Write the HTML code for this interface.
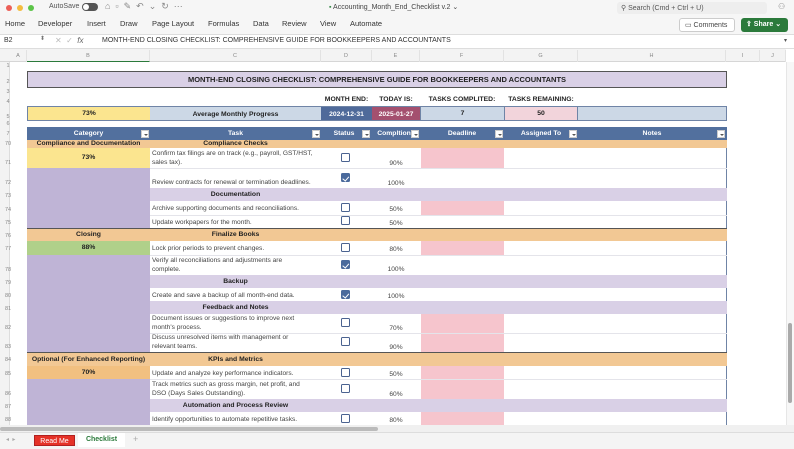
<!DOCTYPE html>
<html><head><meta charset="utf-8"><style>
*{margin:0;padding:0;box-sizing:border-box}
body{width:794px;height:449px;overflow:hidden;background:#fff;font-family:"Liberation Sans",sans-serif;position:relative;color:#222}
.a{position:absolute;white-space:nowrap}
.t{font-size:6.6px;color:#444;line-height:9px}
.b{font-weight:bold;font-size:6.8px;color:#222;text-align:center}
.c{text-align:center}
.cb{position:absolute;width:9px;height:9px;border:1.2px solid #4a6290;border-radius:1.5px;background:#fff}
.ck{background:#4a6a9c;border-color:#4a6a9c}
.ck:after{content:"";position:absolute;left:2.2px;top:0.6px;width:2.5px;height:4.5px;border:solid #fff;border-width:0 1.2px 1.2px 0;transform:rotate(40deg)}
.dd{position:absolute;width:8px;height:8px;background:#fff;border:1px solid #ccc}
.dd:after{content:"";position:absolute;left:1.5px;top:2.5px;border-left:2.5px solid transparent;border-right:2.5px solid transparent;border-top:2.5px solid #555}
.rn{position:absolute;left:0;width:16px;font-size:5.5px;color:#888;text-align:center}
.ch{position:absolute;top:50px;height:12px;font-size:5.5px;color:#888;text-align:center;line-height:12px;border-right:1px solid #e2e2e2}
.sh{position:absolute;left:150px;width:577px;height:13px;background:#d9d0e6}
.sh span{position:absolute;left:0;width:171px;top:3px;font-weight:bold;font-size:6.8px;color:#222;text-align:center;white-space:nowrap}
</style></head><body>
<div class="a" style="left:0;top:0;width:794px;height:34px;background:#f6f6f6"></div>
<div class="a" style="left:6px;top:5px;width:6px;height:6px;border-radius:50%;background:#ec5f57"></div>
<div class="a" style="left:17px;top:5px;width:6px;height:6px;border-radius:50%;background:#f4bc3f"></div>
<div class="a" style="left:28px;top:5px;width:6px;height:6px;border-radius:50%;background:#5cc448"></div>
<div class="a" style="left:49px;top:3px;font-size:7px;color:#555">AutoSave</div>
<div class="a" style="left:82px;top:3px;width:16px;height:8px;border-radius:4px;background:#555"></div>
<div class="a" style="left:83px;top:4px;width:6px;height:6px;border-radius:50%;background:#fff"></div>
<div class="a" style="left:105px;top:1px;font-size:9px;color:#888;letter-spacing:5px">⌂▫✎↶⌄↻⋯</div>
<div class="a" style="left:329px;top:3px;font-size:7px;color:#444"><span style="color:#3a8a4a">▪</span> Accounting_Month_End_Checklist v.2 ⌄</div>
<div class="a" style="left:617px;top:2px;width:150px;height:12px;background:#eee;border-radius:3px;font-size:7px;color:#555;padding:2px 0 0 4px">⚲ Search (Cmd + Ctrl + U)</div>
<div class="a" style="left:778px;top:2px;font-size:8px;color:#888">⚇</div>
<div class="a" style="left:5px;top:19px;font-size:7.5px;color:#333">Home</div>
<div class="a" style="left:38px;top:19px;font-size:7.5px;color:#333">Developer</div>
<div class="a" style="left:87px;top:19px;font-size:7.5px;color:#333">Insert</div>
<div class="a" style="left:120px;top:19px;font-size:7.5px;color:#333">Draw</div>
<div class="a" style="left:152px;top:19px;font-size:7.5px;color:#333">Page Layout</div>
<div class="a" style="left:208px;top:19px;font-size:7.5px;color:#333">Formulas</div>
<div class="a" style="left:253px;top:19px;font-size:7.5px;color:#333">Data</div>
<div class="a" style="left:282px;top:19px;font-size:7.5px;color:#333">Review</div>
<div class="a" style="left:320px;top:19px;font-size:7.5px;color:#333">View</div>
<div class="a" style="left:350px;top:19px;font-size:7.5px;color:#333">Automate</div>
<div class="a" style="left:679px;top:18px;width:56px;height:14px;border:1px solid #ccc;border-radius:3px;background:#fff;font-size:7px;color:#444;padding:2px 0 0 5px">▭ Comments</div>
<div class="a" style="left:741px;top:18px;width:47px;height:14px;border-radius:3px;background:#2b7a3b;font-size:7px;color:#fff;font-weight:bold;padding:2px 0 0 5px">⇪ Share ⌄</div>
<div class="a" style="left:0;top:34px;width:794px;height:15px;background:#fff;border-top:1px solid #ddd;border-bottom:1px solid #ddd"></div>
<div class="a" style="left:4px;top:37px;font-size:7px;color:#333">B2</div>
<div class="a" style="left:40px;top:35px;font-size:6px;color:#777">⬍</div>
<div class="a" style="left:55px;top:36px;font-size:8px;color:#bbb">✕ &nbsp;✓ &nbsp;<i style="color:#666">fx</i></div>
<div class="a" style="left:102px;top:37px;font-size:7px;color:#333">MONTH-END CLOSING CHECKLIST: COMPREHENSIVE GUIDE FOR BOOKKEEPERS AND ACCOUNTANTS</div>
<div class="a" style="left:784px;top:37px;font-size:6px;color:#555">▾</div>
<div class="a" style="left:0;top:49px;width:786px;height:13px;background:#f3f3f3;border-bottom:1px solid #d6d6d6"></div>
<div class="ch" style="left:10px;width:17px">A</div>
<div class="ch" style="left:27px;width:123px;border-bottom:1px solid #2b7a3b">B</div>
<div class="ch" style="left:150px;width:171px">C</div>
<div class="ch" style="left:321px;width:51px">D</div>
<div class="ch" style="left:372px;width:48px">E</div>
<div class="ch" style="left:420px;width:84px">F</div>
<div class="ch" style="left:504px;width:74px">G</div>
<div class="ch" style="left:578px;width:148px">H</div>
<div class="ch" style="left:726px;width:34px">I</div>
<div class="ch" style="left:760px;width:26px">J</div>
<div class="a" style="left:0;top:62px;width:10px;height:365px;background:#f3f3f3;border-right:1px solid #ddd"></div>
<div class="rn" style="top:63px">1</div><div class="rn" style="top:79px">2</div><div class="rn" style="top:89px">3</div><div class="rn" style="top:99px">4</div><div class="rn" style="top:114px">5</div><div class="rn" style="top:121px">6</div><div class="rn" style="top:131px">7</div><div class="rn" style="top:141px">70</div><div class="rn" style="top:160px">71</div><div class="rn" style="top:180px">72</div><div class="rn" style="top:193px">73</div><div class="rn" style="top:207px">74</div><div class="rn" style="top:220px">75</div><div class="rn" style="top:233px">76</div><div class="rn" style="top:246px">77</div><div class="rn" style="top:267px">78</div><div class="rn" style="top:280px">79</div><div class="rn" style="top:293px">80</div><div class="rn" style="top:306px">81</div><div class="rn" style="top:325px">82</div><div class="rn" style="top:344px">83</div><div class="rn" style="top:357px">84</div><div class="rn" style="top:371px">85</div><div class="rn" style="top:391px">86</div><div class="rn" style="top:404px">87</div><div class="rn" style="top:417px">88</div>
<div class="a b" style="left:27px;top:71px;width:700px;height:17px;background:#d9d0e6;border:1px solid #555;font-size:7.5px;line-height:15px">MONTH-END CLOSING CHECKLIST: COMPREHENSIVE GUIDE FOR BOOKKEEPERS AND ACCOUNTANTS</div>
<div class="a b" style="left:321px;top:96px;width:51px">MONTH END:</div>
<div class="a b" style="left:372px;top:96px;width:48px">TODAY IS:</div>
<div class="a b" style="left:420px;top:96px;width:84px">TASKS COMPLITED:</div>
<div class="a b" style="left:504px;top:96px;width:74px">TASKS REMAINING:</div>
<div class="a" style="left:27px;top:106px;width:700px;height:15px;background:#ccd8e6;border:1px solid #6f84a6"></div>
<div class="a b" style="left:28px;top:107px;width:122px;height:13px;background:#fbe58f;line-height:13px">73%</div>
<div class="a b" style="left:150px;top:107px;width:171px;line-height:15px">Average Monthly Progress</div>
<div class="a b" style="left:321px;top:107px;width:51px;height:13px;background:#4f6a9a;color:#fff;line-height:15px">2024-12-31</div>
<div class="a b" style="left:372px;top:107px;width:48px;height:13px;background:#a4506f;color:#fff;line-height:15px">2025-01-27</div>
<div class="a b" style="left:420px;top:107px;width:84px;line-height:13px;border-left:1px solid #6f84a6">7</div>
<div class="a b" style="left:504px;top:107px;width:74px;height:13px;background:#f2d4db;line-height:13px;border-left:1px solid #6f84a6;border-right:1px solid #6f84a6">50</div>
<div class="a" style="left:27px;top:127px;width:700px;height:13px;background:#52709e"></div>
<div class="a b" style="left:27px;top:130px;width:123px;color:#fff">Category</div><div class="dd" style="left:141px;top:130px"></div>
<div class="a b" style="left:150px;top:130px;width:171px;color:#fff">Task</div><div class="dd" style="left:312px;top:130px"></div>
<div class="a b" style="left:321px;top:130px;width:46px;color:#fff">Status</div><div class="dd" style="left:362px;top:130px"></div>
<div class="a b" style="left:374px;top:130px;width:40px;color:#fff;overflow:hidden">Compltion</div><div class="dd" style="left:411px;top:130px"></div>
<div class="a b" style="left:420px;top:130px;width:84px;color:#fff">Deadline</div><div class="dd" style="left:495px;top:130px"></div>
<div class="a b" style="left:504px;top:130px;width:74px;color:#fff">Assigned To</div><div class="dd" style="left:569px;top:130px"></div>
<div class="a b" style="left:578px;top:130px;width:148px;color:#fff">Notes</div><div class="dd" style="left:717px;top:130px"></div>
<div class="a" style="left:27px;top:140px;width:700px;height:285px;border-left:1px solid #6f84a6;border-right:1px solid #6f84a6"></div>
<div class="a" style="left:27px;top:140px;width:700px;height:8px;background:#f2c894"></div>
<div class="a b" style="left:27px;top:140px;width:123px;line-height:8px">Compliance and Documentation</div>
<div class="a b" style="left:150px;top:140px;width:171px;line-height:8px">Compliance Checks</div>
<div class="a" style="left:27px;top:228px;width:700px;height:13px;background:#f2c894;border-top:1px solid #555"></div>
<div class="a b" style="left:27px;top:231px;width:123px">Closing</div>
<div class="a b" style="left:150px;top:231px;width:171px">Finalize Books</div>
<div class="a" style="left:27px;top:352px;width:700px;height:14px;background:#f2c894;border-top:1px solid #555"></div>
<div class="a b" style="left:27px;top:356px;width:123px">Optional (For Enhanced Reporting)</div>
<div class="a b" style="left:150px;top:356px;width:171px">KPIs and Metrics</div>
<div class="a b" style="left:27px;top:148px;width:123px;height:20px;background:#fbe58f;line-height:20px">73%</div>
<div class="a" style="left:27px;top:168px;width:123px;height:60px;background:#bfb4d6"></div>
<div class="a b" style="left:27px;top:241px;width:123px;height:14px;background:#b0d08a;line-height:13px">88%</div>
<div class="a" style="left:27px;top:255px;width:123px;height:97px;background:#bfb4d6"></div>
<div class="a b" style="left:27px;top:366px;width:123px;height:13px;background:#f2c080;line-height:13px">70%</div>
<div class="a" style="left:27px;top:379px;width:123px;height:46px;background:#bfb4d6"></div>
<div class="sh" style="top:188px"><span>Documentation</span></div>
<div class="sh" style="top:275px"><span>Backup</span></div>
<div class="sh" style="top:301px"><span>Feedback and Notes</span></div>
<div class="sh" style="top:399px"><span>Automation and Process Review</span></div>
<div class="a" style="left:421px;top:148px;width:83px;height:20px;background:#f6c5cd"></div>
<div class="a" style="left:421px;top:201px;width:83px;height:14px;background:#f6c5cd"></div>
<div class="a" style="left:421px;top:241px;width:83px;height:14px;background:#f6c5cd"></div>
<div class="a" style="left:421px;top:314px;width:83px;height:38px;background:#f6c5cd"></div>
<div class="a" style="left:421px;top:366px;width:83px;height:33px;background:#f6c5cd"></div>
<div class="a" style="left:421px;top:412px;width:83px;height:13px;background:#f6c5cd"></div>
<div class="a" style="left:150px;top:168px;width:577px;border-top:1px solid #e4e4ea"></div>
<div class="a" style="left:150px;top:215px;width:577px;border-top:1px solid #e4e4ea"></div>
<div class="a" style="left:150px;top:255px;width:577px;border-top:1px solid #e4e4ea"></div>
<div class="a" style="left:150px;top:333px;width:577px;border-top:1px solid #e4e4ea"></div>
<div class="a" style="left:150px;top:379px;width:577px;border-top:1px solid #e4e4ea"></div>
<div class="a t" style="left:152px;top:149px">Confirm tax filings are on track (e.g., payroll, GST/HST,<br>sales tax).</div>
<div class="a t" style="left:152px;top:178px">Review contracts for renewal or termination deadlines.</div>
<div class="a t" style="left:152px;top:204px">Archive supporting documents and reconciliations.</div>
<div class="a t" style="left:152px;top:218px">Update workpapers for the month.</div>
<div class="a t" style="left:152px;top:244px">Lock prior periods to prevent changes.</div>
<div class="a t" style="left:152px;top:256px">Verify all reconciliations and adjustments are<br>complete.</div>
<div class="a t" style="left:152px;top:291px">Create and save a backup of all month-end data.</div>
<div class="a t" style="left:152px;top:314px">Document issues or suggestions to improve next<br>month's process.</div>
<div class="a t" style="left:152px;top:333px">Discuss unresolved items with management or<br>relevant teams.</div>
<div class="a t" style="left:152px;top:369px">Update and analyze key performance indicators.</div>
<div class="a t" style="left:152px;top:380px">Track metrics such as gross margin, net profit, and<br>DSO (Days Sales Outstanding).</div>
<div class="a t" style="left:152px;top:415px">Identify opportunities to automate repetitive tasks.</div>
<div class="cb" style="left:341px;top:153px"></div>
<div class="cb ck" style="left:341px;top:173px"></div>
<div class="cb" style="left:341px;top:203px"></div>
<div class="cb" style="left:341px;top:216px"></div>
<div class="cb" style="left:341px;top:243px"></div>
<div class="cb ck" style="left:341px;top:260px"></div>
<div class="cb ck" style="left:341px;top:290px"></div>
<div class="cb" style="left:341px;top:318px"></div>
<div class="cb" style="left:341px;top:337px"></div>
<div class="cb" style="left:341px;top:368px"></div>
<div class="cb" style="left:341px;top:384px"></div>
<div class="cb" style="left:341px;top:414px"></div>
<div class="a t c" style="left:372px;top:159px;width:48px">90%</div>
<div class="a t c" style="left:372px;top:179px;width:48px">100%</div>
<div class="a t c" style="left:372px;top:205px;width:48px">50%</div>
<div class="a t c" style="left:372px;top:219px;width:48px">50%</div>
<div class="a t c" style="left:372px;top:245px;width:48px">80%</div>
<div class="a t c" style="left:372px;top:265px;width:48px">100%</div>
<div class="a t c" style="left:372px;top:292px;width:48px">100%</div>
<div class="a t c" style="left:372px;top:324px;width:48px">70%</div>
<div class="a t c" style="left:372px;top:343px;width:48px">90%</div>
<div class="a t c" style="left:372px;top:370px;width:48px">50%</div>
<div class="a t c" style="left:372px;top:390px;width:48px">60%</div>
<div class="a t c" style="left:372px;top:416px;width:48px">80%</div>
<div class="a" style="left:786px;top:62px;width:8px;height:365px;background:#f7f7f7;border-left:1px solid #e6e6e6"></div>
<div class="a" style="left:788px;top:323px;width:4px;height:80px;background:#aaa;border-radius:2px"></div>
<div class="a" style="left:0;top:425px;width:794px;height:8px;background:#f0f0f0"></div>
<div class="a" style="left:0;top:427px;width:378px;height:4px;background:#bbb;border-radius:2px"></div>
<div class="a" style="left:0;top:432px;width:794px;height:17px;background:#f4f4f4;border-top:1px solid #ddd"></div>
<div class="a" style="left:6px;top:436px;font-size:6px;color:#aaa">◂ &nbsp;▸</div>
<div class="a" style="left:34px;top:435px;width:41px;height:11px;background:#e53228;color:#fff;font-size:7px;text-align:center;line-height:11px;border:1px solid #b02020">Read Me</div>
<div class="a" style="left:78px;top:433px;width:47px;height:14px;background:#fff;color:#2b7a3b;font-size:7px;font-weight:bold;text-align:center;line-height:14px">Checklist</div>
<div class="a" style="left:133px;top:434px;font-size:9px;color:#aaa">+</div>
</body></html>
